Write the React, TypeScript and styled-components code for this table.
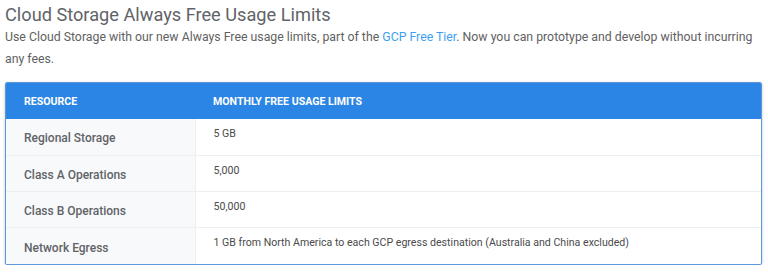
import styled, { createGlobalStyle } from 'styled-components';

const GlobalStyle = createGlobalStyle`
  html, body {
    margin: 0;
    padding: 0;
    background: #ffffff;
  }
  body {
    font-family: Roboto, "Liberation Sans", Arial, sans-serif;
    -webkit-font-smoothing: antialiased;
  }
`;

const Page = styled.div`
  padding: 4px 6px 0 5px;
`;

const Title = styled.h2`
  margin: 0;
  font-size: 18.2px;
  font-weight: 400;
  line-height: 22px;
  color: #5f6368;
`;

const Intro = styled.p`
  margin: 0;
  font-size: 12.3px;
  line-height: 22px;
  color: #616161;
`;

const Link = styled.a`
  color: #3d9ff0;
  text-decoration: none;
`;

const TableWrap = styled.div`
  margin-top: 12px;
  border: 1px solid #5c97de;
  border-radius: 2px;
  box-shadow: 0 1px 3px rgba(0, 0, 0, 0.25);
  overflow: hidden;
`;

const Table = styled.table`
  width: 100%;
  border-collapse: collapse;
  table-layout: fixed;
`;

const HeadCell = styled.th<{ $width?: number }>`
  width: ${p => (p.$width ? `${p.$width}px` : 'auto')};
  background: #2b85e4;
  color: #ffffff;
  font-size: 10.6px;
  font-weight: 700;
  text-transform: uppercase;
  text-align: left;
  height: 36px;
  padding: 0 18px;
  box-sizing: border-box;
`;

const Row = styled.tr`
  & + & > * {
    border-top: 1px solid #eceff1;
  }
`;

const NameCell = styled.th`
  background: #f8f9fa;
  border-right: 1px solid #eef0f2;
  color: #5f6368;
  font-size: 12px;
  font-weight: 500;
  text-align: left;
  height: 36.3px;
  padding: 3px 18px 0;
  vertical-align: middle;
  box-sizing: border-box;
`;

const ValueCell = styled.td`
  color: #4a4a4a;
  font-size: 10.6px;
  vertical-align: top;
  padding: 8px 18px 0;
  box-sizing: border-box;
`;

const limits = [
  { resource: 'Regional Storage', limit: '5 GB' },
  { resource: 'Class A Operations', limit: '5,000' },
  { resource: 'Class B Operations', limit: '50,000' },
  {
    resource: 'Network Egress',
    limit: '1 GB from North America to each GCP egress destination (Australia and China excluded)',
  },
];

export default function App() {
  return (
    <>
      <GlobalStyle />
      <Page>
        <Title>Cloud Storage Always Free Usage Limits</Title>
        <Intro>
          Use Cloud Storage with our new Always Free usage limits, part of the{' '}
          <Link href="#">GCP Free Tier</Link>. Now you can prototype and develop without incurring
          any fees.
        </Intro>
        <TableWrap>
          <Table>
            <thead>
              <tr>
                <HeadCell $width={189}>Resource</HeadCell>
                <HeadCell>Monthly Free Usage Limits</HeadCell>
              </tr>
            </thead>
            <tbody>
              {limits.map(item => (
                <Row key={item.resource}>
                  <NameCell>{item.resource}</NameCell>
                  <ValueCell>{item.limit}</ValueCell>
                </Row>
              ))}
            </tbody>
          </Table>
        </TableWrap>
      </Page>
    </>
  );
}
